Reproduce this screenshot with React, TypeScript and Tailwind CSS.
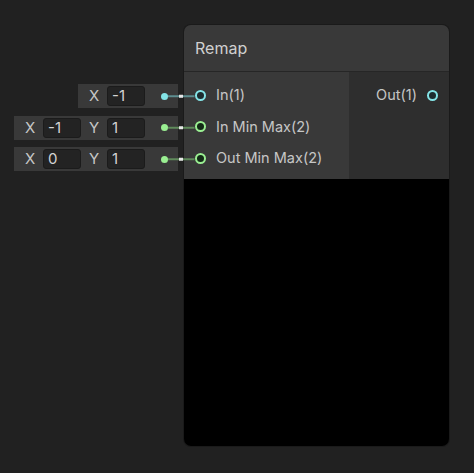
import React from 'react';

type Field = { label: string; value: string };
type InputRow = { fields: Field[]; color: string };

const CYAN = '#84e4e7';
const GREEN = '#9aef92';

const inputs: InputRow[] = [
  { fields: [{ label: 'X', value: '-1' }], color: CYAN },
  { fields: [{ label: 'X', value: '-1' }, { label: 'Y', value: '1' }], color: GREEN },
  { fields: [{ label: 'X', value: '0' }, { label: 'Y', value: '1' }], color: GREEN },
];

const ports = [
  { name: 'In(1)', color: CYAN, fill: '#1d2c2f' },
  { name: 'In Min Max(2)', color: GREEN, fill: '#132a16' },
  { name: 'Out Min Max(2)', color: GREEN, fill: '#132a16' },
];

// wire segments between inline fields and node ports
const wires = [
  { y: 96.25, line: '#5d8e90' },
  { y: 127.75, line: '#5f8a5b' },
  { y: 159.25, line: '#5f8a5b' },
];

function Ring({ color, fill }: { color: string; fill: string }) {
  return (
    <span
      className="block w-[11px] h-[11px] rounded-full border-2 shrink-0"
      style={{ borderColor: color, backgroundColor: fill }}
    />
  );
}

export default function App() {
  return (
    <div
      className="relative w-[474px] h-[473px] bg-[#212121] overflow-hidden text-[#c6c6c6]"
      style={{ fontFamily: 'Inter, "Noto Sans", sans-serif' }}
    >
      <div className="flex pt-[25px]">
        {/* inline value fields */}
        <div className="w-[184px] flex flex-col items-end pr-[6px] pt-[55.5px]">
          {inputs.map((row, i) => (
            <div key={i} className="h-[31.5px] flex items-center">
              <div className="h-[24px] flex items-center bg-[#393939] pl-[3px]">
                {row.fields.map((f, j) => (
                  <div key={j} className="flex items-center">
                    <span className="w-[26px] text-center text-[15px]">{f.label}</span>
                    <div className="w-[38px] h-[20px] rounded-[3px] bg-[#232323] border border-[#1b1b1b] flex items-center pl-[4px] text-[15px] text-[#d4d4d4]">
                      {f.value}
                    </div>
                  </div>
                ))}
                <div className="w-[33px] flex items-center pl-[16px]">
                  <span className="block w-[7px] h-[7px] rounded-full" style={{ backgroundColor: row.color }} />
                </div>
              </div>
            </div>
          ))}
        </div>

        {/* node */}
        <div className="w-[265px] h-[421px] flex flex-col rounded-[7px] overflow-hidden shadow-[0_0_0_1px_#1a1a1a]">
          <div className="h-[47px] bg-[#393939] border-b border-[#262626] flex items-center pl-[11px] text-[16px] text-[#d0d0d0] shrink-0">
            Remap
          </div>
          <div className="flex shrink-0">
            <div className="w-[165px] bg-[#393939] pt-[7.5px] pb-[5px]">
              {ports.map((p) => (
                <div key={p.name} className="h-[31.5px] flex items-center pl-[11px] gap-[10px] text-[14.5px]">
                  <Ring color={p.color} fill={p.fill} />
                  <span>{p.name}</span>
                </div>
              ))}
            </div>
            <div className="flex-1 bg-[#2e2e2e] pt-[7.5px]">
              <div className="h-[31.5px] flex items-center justify-end pr-[11px] gap-[10px] text-[14.5px]">
                <span>Out(1)</span>
                <Ring color={CYAN} fill="#1d2c2f" />
              </div>
            </div>
          </div>
          <div className="flex-1 bg-black" />
        </div>
      </div>

      {/* connection wires drawn over the canvas */}
      <svg className="absolute left-0 top-0 pointer-events-none" width="474" height="473">
        {wires.map((w) => (
          <g key={w.y}>
            <line x1="168" y1={w.y} x2="194.5" y2={w.y} stroke={w.line} strokeWidth="2" />
            <rect x="179" y={w.y - 1.5} width="4" height="3" fill="#e6e6e6" />
          </g>
        ))}
      </svg>
    </div>
  );
}
